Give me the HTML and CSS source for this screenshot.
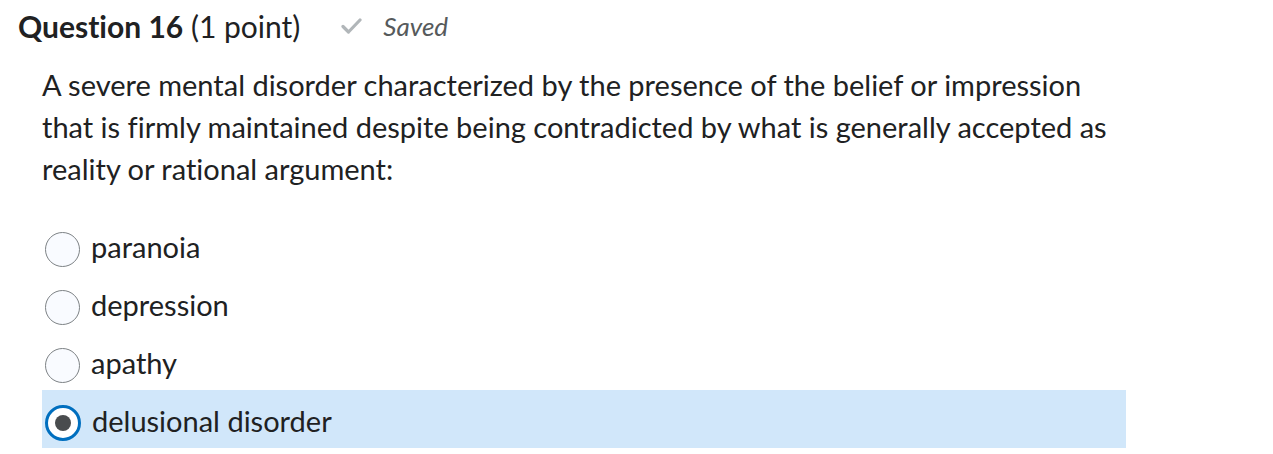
FILE: index.html
```html
<!DOCTYPE html>
<html>
<head>
<meta charset="utf-8">
<link rel="stylesheet" href="styles.css">
</head>
<body>
<div class="question">
  <div class="qhead">
    <h2 class="qtitle"><strong>Question 16</strong> (1 point)</h2>
    <span class="saved">
      <svg class="check" width="21" height="18" viewBox="0 0 21 18"><path d="M2 9.5 L7.5 15 L19 3" fill="none" stroke="#b1b6b9" stroke-width="3.2" stroke-linecap="round" stroke-linejoin="round"/></svg>
      <em>Saved</em>
    </span>
  </div>
  <p class="qtext">A severe mental disorder characterized by the presence of the belief or impression that is firmly maintained despite being contradicted by what is generally accepted as reality or rational argument:</p>
  <div class="options">
    <label class="opt"><span class="radio"></span><span class="otext">paranoia</span></label>
    <label class="opt"><span class="radio"></span><span class="otext">depression</span></label>
    <label class="opt"><span class="radio"></span><span class="otext">apathy</span></label>
    <label class="opt selected"><span class="radio on"></span><span class="otext">delusional disorder</span></label>
  </div>
</div>
</body>
</html>
```
FILE: styles.css
```css
html, body { margin: 0; padding: 0; background: #fff; }
body { font-family: Lato, "Noto Sans", sans-serif; color: #202122; font-variant-ligatures: none; }
.question { padding: 6px 0 0 18px; }
.qhead { display: flex; align-items: center; height: 40px; }
.qtitle { margin: 0; font-size: 30px; font-weight: 400; line-height: 40px; }
.qtitle strong { font-weight: 700; }
.saved { display: flex; align-items: center; margin-left: 41px; color: #565a5c; font-size: 26px; }
.check { margin-right: 21px; }
.qtext { margin: 18px 0 0 24px; width: 1084px; font-size: 29px; line-height: 42px; }
.options { margin: 26px 0 0 24px; width: 1084px; }
.opt { display: flex; align-items: center; box-sizing: border-box; height: 58px; padding-top: 8px; }
.opt.selected { background: #d1e7fa; }
.radio { box-sizing: border-box; width: 35px; height: 35px; border: 1px solid #7d8285; border-radius: 50%; background: #f9fbff; margin-left: 3px; flex: none; }
.radio.on { width: 36px; height: 36px; border: 3px solid #006fbf; background: #fff; position: relative; }
.radio.on::after { content: ""; position: absolute; left: 7px; top: 7px; width: 16px; height: 16px; border-radius: 50%; background: #494c4e; }
.otext { margin-left: 11px; margin-bottom: 4px; font-size: 29px; line-height: 36px; }
```
